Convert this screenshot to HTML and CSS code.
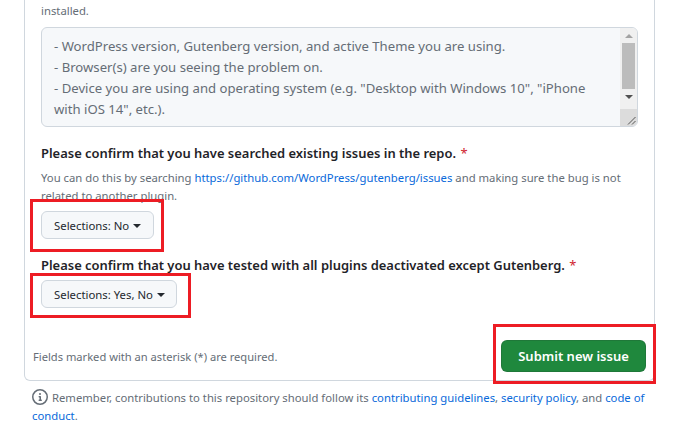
FILE: index.html
```html
<!DOCTYPE html>
<html lang="en">
<head>
<meta charset="utf-8">
<title>New issue</title>
<link rel="stylesheet" href="styles.css">
</head>
<body>
<main class="page">
  <form class="card">
    <div class="fields">
      <p class="note note-top">installed.</p>
      <div class="textarea">
        <div class="textarea-text">- WordPress version, Gutenberg version, and active Theme you are using.<br>- Browser(s) are you seeing the problem on.<br>- Device you are using and operating system (e.g. "Desktop with Windows 10", "iPhone with iOS 14", etc.).</div>
        <div class="scroll">
          <div class="scroll-track">
            <span class="arrow arrow-up"></span>
            <span class="thumb"></span>
            <span class="arrow arrow-down"></span>
          </div>
          <div class="grip">
            <svg width="17" height="17" viewBox="0 0 17 17"><path d="M8 15.5 15.5 8M12 15.5 15.5 12" stroke="#555" stroke-width="1" fill="none"/></svg>
          </div>
        </div>
      </div>
      <h3 class="label label-one">Please confirm that you have searched existing issues in the repo. <span class="req">*</span></h3>
      <p class="note note-help">You can do this by searching <a href="#">https://github.com/WordPress/gutenberg/issues</a> and making sure the bug is not related to another plugin.</p>
      <button type="button" class="select select-one">Selections: No<span class="caret"></span></button>
      <h3 class="label label-two">Please confirm that you have tested with all plugins deactivated except Gutenberg. <span class="req">*</span></h3>
      <button type="button" class="select select-two">Selections: Yes, No<span class="caret"></span></button>
    </div>
    <div class="footer">
      <span class="required-note">Fields marked with an asterisk (*) are required.</span>
      <button type="button" class="submit">Submit new issue</button>
    </div>
  </form>
  <p class="remember">
    <svg class="info" width="16" height="16" viewBox="0 0 16 16"><path fill="#656d76" d="M0 8a8 8 0 1 1 16 0A8 8 0 0 1 0 8Zm8-6.5a6.5 6.5 0 1 0 0 13 6.5 6.5 0 0 0 0-13ZM6.5 7.75A.75.75 0 0 1 7.25 7h1a.75.75 0 0 1 .75.75v2.75h.25a.75.75 0 0 1 0 1.5h-2a.75.75 0 0 1 0-1.5h.25v-2h-.25a.75.75 0 0 1-.75-.75ZM8 6a1 1 0 1 1 0-2 1 1 0 0 1 0 2Z"/></svg>
    Remember, contributions to this repository should follow its <a href="#">contributing guidelines</a>, <a href="#">security policy</a>, and <a href="#">code of conduct</a>.
  </p>
</main>
<div class="mark mark-one"></div>
<div class="mark mark-two"></div>
<div class="mark mark-three"></div>
</body>
</html>
```
FILE: styles.css
```css
html, body {
  margin: 0;
  padding: 0;
  background: #fff;
  height: 448px;
  overflow: hidden;
}
body {
  position: relative;
  font-family: "Noto Sans", "Open Sans", sans-serif;
  color: #1f2328;
}
.page {
  width: 631px;
  margin-left: 24px;
}
.card {
  box-sizing: border-box;
  height: 381px;
  border: 1px solid #d0d7de;
  border-top: none;
  border-radius: 0 0 6px 6px;
  padding: 0 8px;
  display: flex;
  flex-direction: column;
}
.fields {
  padding: 0 8px;
  flex: 1;
}
.note {
  margin: 0;
  font-size: 11.3px;
  line-height: 18px;
  color: #656d76;
}
.note-top {
  margin-top: 2px;
}
.textarea {
  box-sizing: border-box;
  width: 597px;
  height: 100px;
  margin-top: 7px;
  background: #f6f8fa;
  border: 1px solid #d0d7de;
  border-radius: 6px;
  display: flex;
  overflow: hidden;
}
.textarea-text {
  flex: 1;
  padding: 8px 12px;
  font-size: 13.15px;
  line-height: 21px;
  color: #656d76;
}
.scroll {
  width: 17px;
  display: flex;
  flex-direction: column;
  flex: none;
}
.scroll-track {
  flex: 1;
  background: #f0f0f0;
  display: flex;
  flex-direction: column;
  align-items: center;
  padding-top: 6px;
}
.arrow {
  width: 0;
  height: 0;
  border-left: 4px solid transparent;
  border-right: 4px solid transparent;
}
.arrow-up {
  border-bottom: 4px solid #a3a3a3;
}
.thumb {
  width: 13px;
  height: 46px;
  margin: 5px 0 6px;
  background: #bcbcbc;
}
.arrow-down {
  border-top: 4px solid #505050;
}
.grip {
  height: 17px;
  background: #dcdcdc;
}
.grip svg {
  display: block;
}
.label {
  margin: 0;
  font-size: 12.95px;
  line-height: 18px;
  font-weight: 600;
  color: #1f2328;
}
.label-one {
  margin-top: 17px;
}
.label-two {
  margin-top: 17px;
}
.req {
  color: #cf222e;
  font-weight: 400;
  margin-left: 1px;
}
.note-help {
  margin-top: 7px;
}
a {
  color: #0969da;
  text-decoration: none;
}
.select {
  display: flex;
  align-items: center;
  box-sizing: border-box;
  height: 28px;
  padding: 1px 12px 0;
  background: #f6f8fa;
  border: 1px solid #d0d7de;
  border-radius: 6px;
  font: 400 11.35px/20px "Noto Sans", sans-serif;
  color: #24292f;
  white-space: nowrap;
}
.select-one {
  width: 113px;
  margin-top: 6px;
}
.select-two {
  width: 136px;
  margin-top: 6px;
}
.caret {
  width: 0;
  height: 0;
  margin-left: 4px;
  border-top: 4px solid #24292f;
  border-left: 4px solid transparent;
  border-right: 4px solid transparent;
}
.footer {
  display: flex;
  justify-content: space-between;
  align-items: center;
  height: 32px;
  margin-bottom: 8px;
}
.required-note {
  font-size: 11.15px;
  color: #656d76;
}
.submit {
  box-sizing: border-box;
  width: 145px;
  height: 32px;
  padding: 0;
  background: #1f883d;
  border: 1px solid rgba(31, 35, 40, 0.15);
  border-radius: 6px;
  font: 600 13px/20px "Noto Sans", sans-serif;
  color: #fff;
}
.remember {
  margin: 8px 0 0 8px;
  font-size: 11.3px;
  line-height: 18px;
  color: #656d76;
}
.info {
  vertical-align: -3px;
  margin-right: 1px;
}
.mark {
  position: absolute;
  box-sizing: border-box;
  border: 3px solid #ed1c24;
}
.mark-one {
  left: 30px;
  top: 199px;
  width: 134px;
  height: 53px;
}
.mark-two {
  left: 30px;
  top: 273px;
  width: 161px;
  height: 45px;
}
.mark-three {
  left: 493px;
  top: 324px;
  width: 163px;
  height: 60px;
}
```
